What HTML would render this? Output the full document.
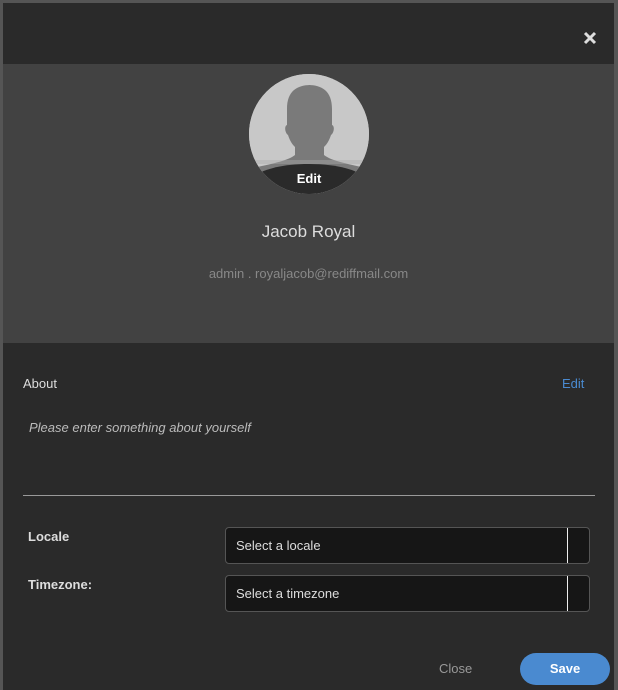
<!DOCTYPE html>
<html><head><style>
body{margin:0;width:618px;height:690px;background:#555;font-family:"Liberation Sans",sans-serif;overflow:hidden;position:relative}
.m{position:absolute;left:3px;top:3px;width:611px;height:687px;background:#2a2a2a}
.hd{height:61px;position:relative}
.x{position:absolute;left:578px;top:26px;width:18px;height:18px}
.pr{height:279px;background:#424242;position:relative;text-align:center}
.av{position:absolute;left:246px;top:10px;width:120px;height:120px;border-radius:50%;overflow:hidden;background:#c8c8c8}
.t{position:absolute;width:100%;text-align:center}
</style></head><body>
<div class="m">
<div class="hd"><svg class="x" viewBox="0 0 18 18"><path d="M4 4L14 14M14 4L4 14" stroke="#ddd" stroke-width="3"/></svg></div>
<div class="pr">
<div class="av"><svg width="120" height="120" viewBox="0 0 120 120">
<rect width="120" height="120" fill="#c8c8c8"/>
<path d="M59 11c14 0 24 6 24 24v16c3 1 2 8-1 10c-2 6-4 9-7 12v8c8 6 20 8 46 14v35H0V95c26-6 38-8 46-14v-8c-3-3-5-6-7-12c-3-2-4-9-1-10V35c0-18 10-24 24-24z" fill="#7a7a7a"/>
<rect y="86" width="120" height="4" fill="#aaa" opacity=".4"/>
<path d="M0 120V104c14-8 30-14 60-14s46 6 60 14v16z" fill="#2a2a2a"/>
<text x="60" y="109" text-anchor="middle" fill="#fff" font-size="13" font-weight="bold" font-family="Liberation Sans">Edit</text>
</svg></div>
<div class="t" style="top:158px;font-size:17px;color:#ddd">Jacob Royal</div>
<div class="t" style="top:202px;font-size:13px;color:#888">admin . royaljacob@rediffmail.com</div>
</div>
<div style="position:absolute;left:20px;top:373px;font-size:13px;color:#ddd">About</div>
<div style="position:absolute;left:559px;top:373px;font-size:13px;color:#4a8ad0">Edit</div>
<div style="position:absolute;left:26px;top:417px;font-size:13px;color:#bbb;font-style:italic">Please enter something about yourself</div>
<div style="position:absolute;left:20px;top:492px;width:572px;height:1px;background:#999"></div>
<div style="position:absolute;left:25px;top:526px;font-size:13px;color:#ddd;font-weight:bold">Locale</div>
<div style="position:absolute;left:25px;top:574px;font-size:13px;color:#ddd;font-weight:bold">Timezone:</div>
<div style="position:absolute;left:222px;top:524px;width:363px;height:35px;background:#161616;border:1px solid #555;border-radius:4px"><div style="position:absolute;left:10px;top:10px;font-size:13px;color:#ddd">Select a locale</div><div style="position:absolute;left:341px;top:0;width:1px;height:35px;background:#eee"></div></div>
<div style="position:absolute;left:222px;top:572px;width:363px;height:35px;background:#161616;border:1px solid #555;border-radius:4px"><div style="position:absolute;left:10px;top:10px;font-size:13px;color:#ddd">Select a timezone</div><div style="position:absolute;left:341px;top:0;width:1px;height:35px;background:#eee"></div></div>
<div style="position:absolute;left:436px;top:658px;font-size:13px;color:#999">Close</div>
<div style="position:absolute;left:517px;top:650px;width:90px;height:32px;border-radius:16px;background:#4a8ad0;color:#fff;font-weight:bold;font-size:13px;text-align:center;line-height:32px">Save</div>
</div>
</body></html>
